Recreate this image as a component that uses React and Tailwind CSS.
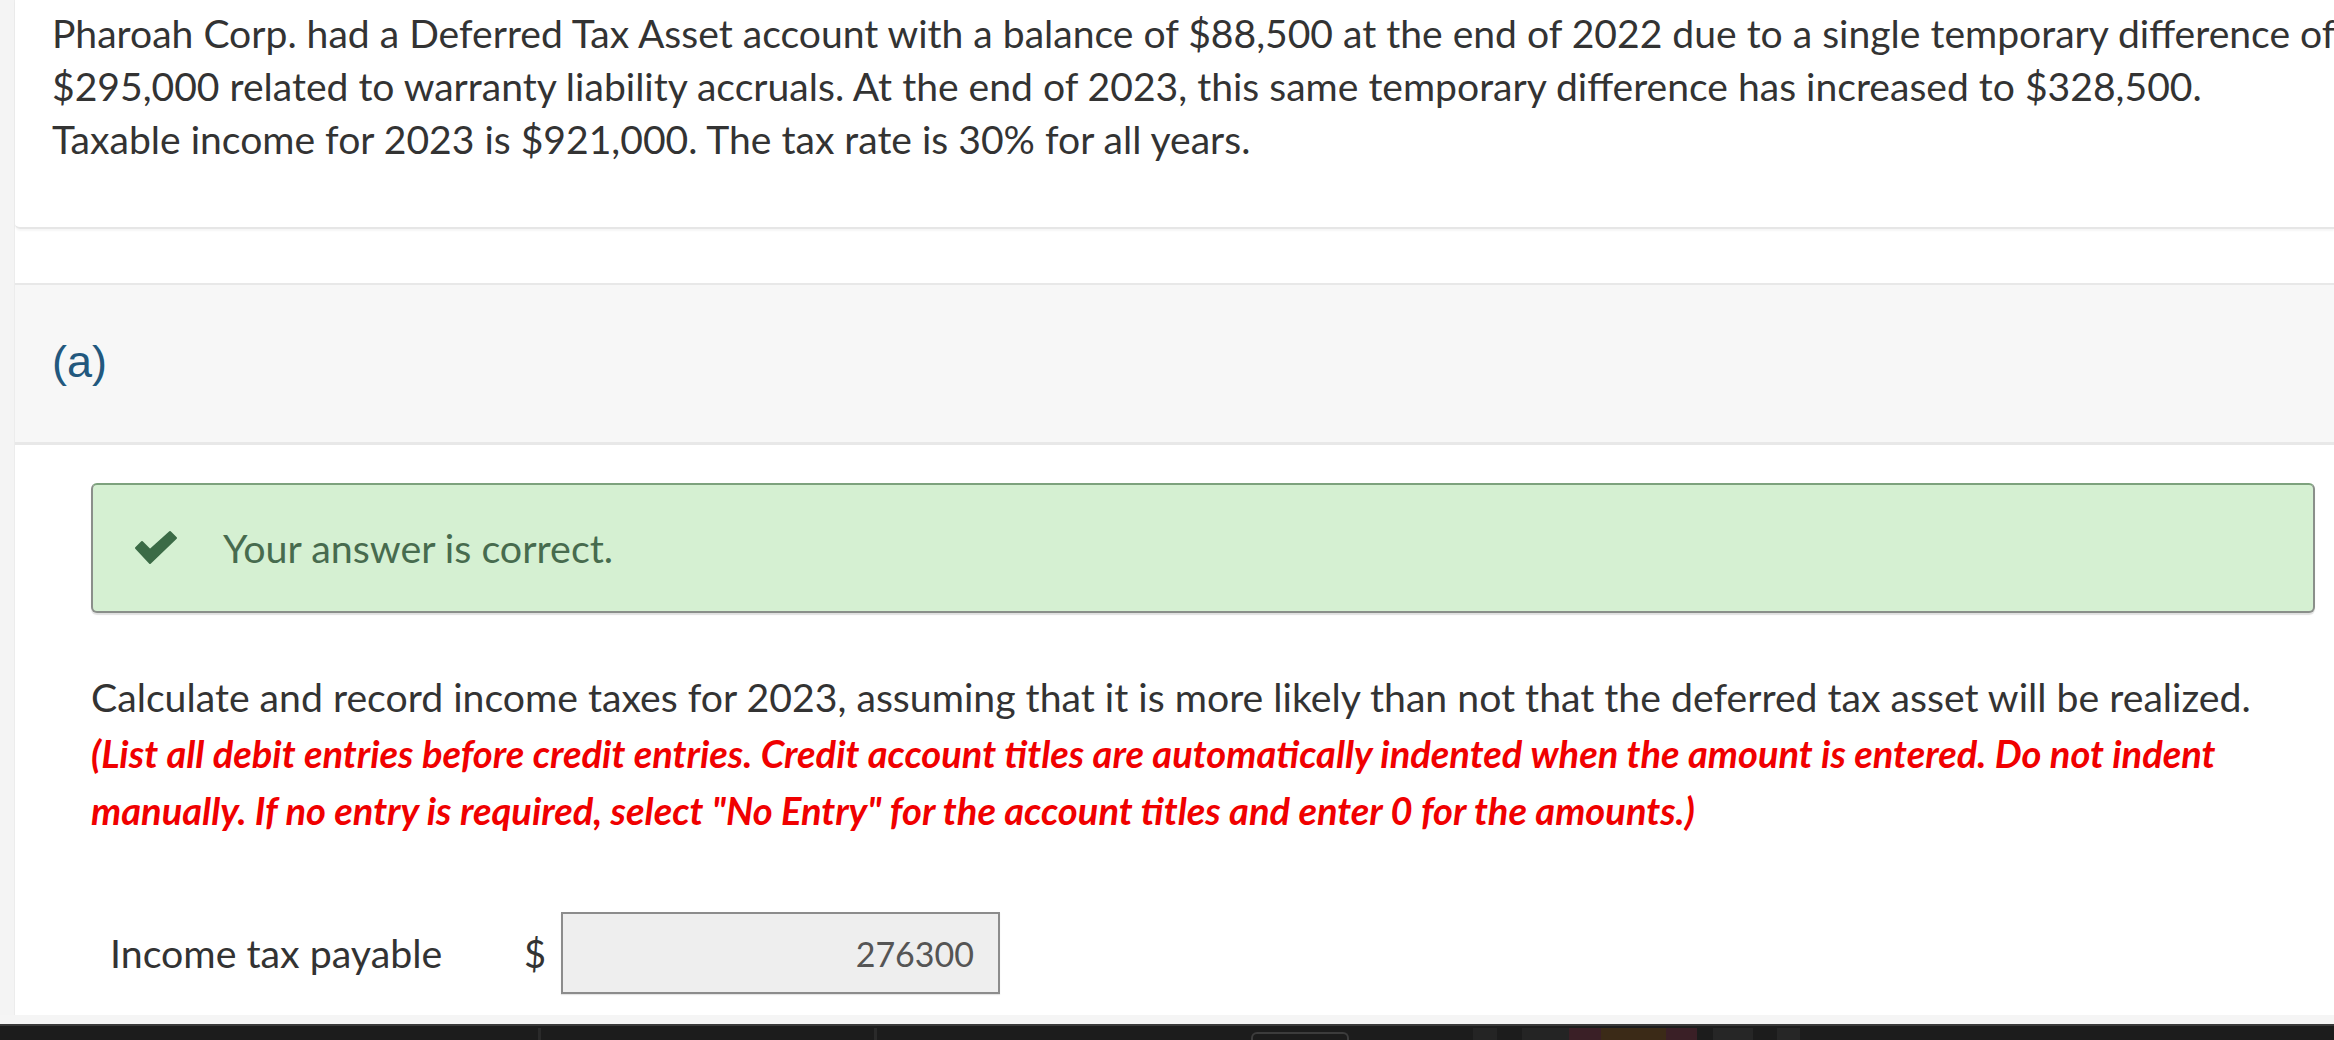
import React from "react";

function CheckIcon() {
  return (
    <svg width="46" height="36" viewBox="0 0 46 36" className="shrink-0">
      <path
        d="M3 18 L9 12 L17 20 L37 2 L43 8 L17 33 Z"
        fill="#3b6b46"
        stroke="#3b6b46"
        strokeWidth="2"
        strokeLinejoin="round"
      />
    </svg>
  );
}

function Taskbar() {
  return (
    <div className="h-[16px] w-full bg-[#1c1c1c] border-t-2 border-[#3a3a3a] flex items-end">
      <div className="ml-[538px] w-[3px] h-[12px] bg-[#2a2a2a]" />
      <div className="ml-[333px] w-[3px] h-[12px] bg-[#2a2a2a]" />
      <div className="ml-[374px] w-[98px] h-[8px] border-2 border-b-0 border-[#3c3c3c] rounded-t-[6px]" />
      <div className="ml-[124px] w-[24px] h-[12px] bg-[#242424]" />
      <div className="ml-[25px] w-[47px] h-[12px] bg-[#242424]" />
      <div className="w-[32px] h-[12px] bg-[#3a1f26]" />
      <div className="w-[65px] h-[12px] bg-[#3b2a17]" />
      <div className="w-[31px] h-[12px] bg-[#3a1f26]" />
      <div className="ml-[16px] w-[40px] h-[12px] bg-[#262626]" />
      <div className="ml-[24px] w-[23px] h-[12px] bg-[#262626]" />
    </div>
  );
}

export default function App() {
  return (
    <div className="w-[2334px] h-[1040px] overflow-hidden bg-[#f5f5f5] flex flex-col font-['Lato','Open_Sans',sans-serif] text-[#333333]">
      <div className="flex-1 flex min-h-0">
        {/* left page strip */}
        <div className="w-[15px] shrink-0 bg-[#f4f4f4] border-r border-[#ececec]" />

        <div className="flex-1 min-w-0 bg-white flex flex-col">
          {/* Question card */}
          <div className="h-[229px] shrink-0 bg-white border-b-2 border-[#e6e6e6] rounded-bl-[5px] shadow-[0_2px_2px_rgba(0,0,0,0.04)] pl-[37px] pt-[6px]">
            <p className="text-[39.1px] leading-[53px] whitespace-nowrap">
              Pharoah Corp. had a Deferred Tax Asset account with a balance of $88,500 at the end of 2022 due to a single temporary difference of
              <br />
              $295,000 related to warranty liability accruals. At the end of 2023, this same temporary difference has increased to $328,500.
              <br />
              Taxable income for 2023 is $921,000. The tax rate is 30% for all years.
            </p>
          </div>

          {/* Part header */}
          <div className="mt-[54px] h-[162px] shrink-0 bg-[#f7f7f7] border-t-2 border-b-[3px] border-[#e8e8e8] flex items-center pl-[37px]">
            <span className="font-['Liberation_Sans',Arial,sans-serif] text-[45px] text-[#22587e] -mt-[4px]">(a)</span>
          </div>

          {/* Part body */}
          <div className="flex-1 flex flex-col pl-[76px]">
            <div className="mt-[38px] w-[2224px] h-[130px] shrink-0 bg-[#d5f0d2] border-2 border-[#8a8f8a] border-t-[#7da27d] rounded-[6px] shadow-[0_2px_1px_rgba(0,0,0,0.12)] flex items-center pl-[40px]">
              <CheckIcon />
              <span className="ml-[44px] text-[39.4px] text-[#476b4e]">Your answer is correct.</span>
            </div>

            <div className="mt-[55px] text-[39.2px] leading-[57px] whitespace-nowrap">
              <p>Calculate and record income taxes for 2023, assuming that it is more likely than not that the deferred tax asset will be realized.</p>
              <p className="text-[#f00000] font-bold italic text-[38.1px]">
                (List all debit entries before credit entries. Credit account titles are automatically indented when the amount is entered. Do not indent
                <br />
                manually. If no entry is required, select "No Entry" for the account titles and enter 0 for the amounts.)
              </p>
            </div>

            <div className="mt-[73px] flex items-center">
              <span className="ml-[19px] w-[414px] text-[39.3px]">Income tax payable</span>
              <span className="text-[38px] w-[37px]">$</span>
              <div className="w-[439px] h-[82px] bg-[#eeeeee] border-2 border-[#8c8c8c] shadow-[0_1px_1px_rgba(0,0,0,0.1)] flex items-center justify-end pr-[24px]">
                <span className="text-[34px] text-[#555555]">276300</span>
              </div>
            </div>
          </div>
        </div>
      </div>

      <div className="h-[9px] shrink-0 bg-[#f5f5f5]" />
      <Taskbar />
    </div>
  );
}
